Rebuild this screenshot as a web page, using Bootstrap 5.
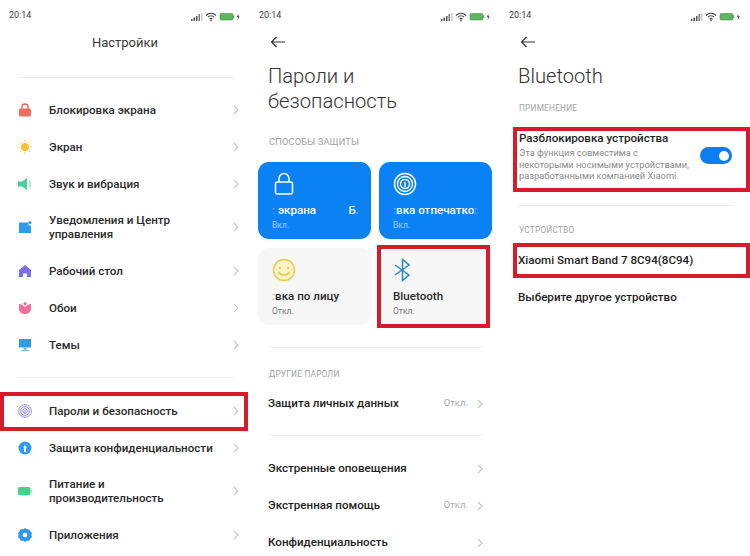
<!DOCTYPE html>
<html lang="ru">
<head>
<meta charset="UTF-8">
<title>Настройки</title>
<link rel="stylesheet" href="https://cdn.jsdelivr.net/npm/bootstrap@5.3.0/dist/css/bootstrap.min.css">
<style>
    html, body { height: 556px; overflow: hidden; }
    body { background: #fff; font-family: Roboto, "Noto Sans", sans-serif; color: #222; }
    .phones { width: 750px; height: 556px; }
    .phone { width: 250px; flex: none; overflow: hidden; position: relative; }
    .status { height: 30px; padding: 8px 9px 0 9px; font-size: 9px; line-height: 14px; color: #444; }
    .top-title { height: 24px; margin-top: 1px; margin-bottom: 22px; font-size: 13px; line-height: 24px; color: #3c3c3c; }
    .hr-line { height: 1px; background: #eee; margin-left: 18px; margin-right: 16px; }
    .set-row { min-height: 37px; padding-left: 18px; padding-right: 11px; font-size: 11.6px; font-weight: 500; line-height: 14px; color: #2a2a2a; position: relative; }
    .set-row.two-line { min-height: 50px; }
    .set-row.marked { min-height: 39px; margin-bottom: -2px; padding-bottom: 2px; }
    .row-ic { width: 14px; height: 14px; flex: none; margin-right: 17px; display: block; }
    .chev { width: 6px; height: 10px; flex: none; display: block; }
    .row-txt { flex: 1; }
    .red-box { position: absolute; border: 4px solid #d71a2c; pointer-events: none; }
    .settings-list { padding-top: 13px; }
    .group-gap { margin-top: 14px; margin-bottom: 14px; }
    .back-arrow { display: block; width: 16px; height: 12px; margin: 6px 0 0 20px; }
    .big-title { font-size: 20.2px; font-weight: 300; line-height: 25px; color: #333; margin: 16px 0 0 18px; }
    .sect-label { font-size: 8.3px; line-height: 12px; color: #a2a2a2; letter-spacing: .2px; margin-left: 19px; }
    .sect-label.wide { font-size: 9.2px; margin-top: 22px; }
    .tiles { padding-left: 8px; width: 242px; margin-top: 14px; display: grid; grid-template-columns: 113px 113px; gap: 9px 8px; }
    .tile { height: 77px; border-radius: 11px; padding: 10px 12px 0 14px; position: relative; color: #fff; }
    .tile-on { background: #0a82f5; }
    .tile-off { background: #f7f7f7; color: #2a2a2a; }
    .tile-ic { display: block; height: 24px; }
    .tile-ic.lock { margin-left: 2px; }
    .tile-name { font-size: 11.6px; font-weight: 500; line-height: 14px; margin-top: 7px; white-space: nowrap; overflow: hidden; }
    .tile-sub { font-size: 8.5px; line-height: 12px; margin-top: 2px; opacity: .6; }
    .tile-off .tile-sub { color: #777; opacity: 1; }
    .faded { opacity: .35; }
    .pass-row { padding-left: 18px; padding-right: 17px; min-height: 37px; font-size: 11.6px; font-weight: 500; color: #1e1e1e; }
    .off-note { font-size: 9.5px; font-weight: 400; color: #aaa; margin-right: 9px; }
    .unlock-box { height: 65px; margin-top: 13px; padding: 4px 18px 0 19px; }
    .sw-track { width: 32px; height: 17px; border-radius: 9px; background: #0a7df0; flex: none; padding: 0 3px; margin-top: 16px; }
    .sw-knob { width: 10px; height: 10px; border-radius: 50%; background: #fff; }
    .unlock-text { font-size: 9.3px; line-height: 11.5px; color: #8b8b8b; margin-top: 2px; }
    .unlock-title { font-size: 11.6px; font-weight: 500; line-height: 14px; color: #1e1e1e; }
</style>
</head>
<body>
<svg width="0" height="0" class="position-absolute">
    <symbol id="st-icons" viewBox="0 0 50 10">
        <rect x="0" y="7" width="1.5" height="2" fill="#555"/><rect x="2.5" y="5.5" width="1.5" height="3.5" fill="#555"/><rect x="5" y="4" width="1.5" height="5" fill="#555"/><rect x="7.5" y="2" width="1.5" height="7" fill="#777"/><rect x="10" y="1" width="1.5" height="8" fill="#ccc"/>
        <path d="M15 3.5c3-2.8 7-2.8 10 0M16.8 5.2c2-1.8 4.4-1.8 6.4 0M18.6 7c1-.9 1.8-.9 2.8 0" fill="none" stroke="#444" stroke-width="1.1"/><circle cx="20" cy="8.4" r=".8" fill="#444"/>
        <rect x="29" y="1.5" width="13" height="6.5" rx="1.3" fill="#5cb85c" stroke="#4a8f4a" stroke-width=".6"/><rect x="42.3" y="3.4" width="1" height="2.6" fill="#4a8f4a"/>
        <path d="M47.5 1.5 45.8 5.2h1.3l-.5 3 2-3.9h-1.3z" fill="#444"/>
    </symbol>
    <symbol id="chev" viewBox="0 0 6 10"><path d="M1 1l4 4-4 4" fill="none" stroke="#c4c4c4" stroke-width="1.1"/></symbol>
    <symbol id="back" viewBox="0 0 16 12"><path d="M15 6H1.5M6.5 1 1.5 6l5 5" fill="none" stroke="#333" stroke-width="1.2"/></symbol>
</svg>

<div class="phones d-flex">
    <!-- settings -->
    <div class="phone">
        <div class="status d-flex justify-content-between"><span>20:14</span><svg width="50" height="10" class="mt-1"><use href="#st-icons"/></svg></div>
        <div class="top-title text-center">Настройки</div>
        <div class="hr-line"></div>
        <div class="settings-list">
            <div class="set-row d-flex align-items-center">
                <svg class="row-ic" viewBox="0 0 14 14"><path d="M4 6V4a3 3 0 0 1 6 0v2" fill="none" stroke="#f0685a" stroke-width="1.5"/><rect x="1" y="5.5" width="12" height="8" rx="1.5" fill="#f0705f"/></svg>
                <span class="row-txt">Блокировка экрана</span><svg class="chev"><use href="#chev"/></svg>
            </div>
            <div class="set-row d-flex align-items-center">
                <svg class="row-ic" viewBox="0 0 14 14"><circle cx="7" cy="7" r="4" fill="#fbc02d"/><path d="M7 0v2M7 12v2M0 7h2M12 7h2M2 2l1.4 1.4M10.6 10.6 12 12M2 12l1.4-1.4M10.6 3.4 12 2" stroke="#fcd665" stroke-width="1.2"/></svg>
                <span class="row-txt">Экран</span><svg class="chev"><use href="#chev"/></svg>
            </div>
            <div class="set-row d-flex align-items-center">
                <svg class="row-ic" viewBox="0 0 14 14"><path d="M0 4.5h4L9 1v12L4 9.500H0z" fill="#4fcf9a"/><path d="M11 4c1.500 1.800 1.500 4.200 0 6" fill="none" stroke="#8fe2c0" stroke-width="1.500"/></svg>
                <span class="row-txt">Звук и вибрация</span><svg class="chev"><use href="#chev"/></svg>
            </div>
            <div class="set-row two-line d-flex align-items-center">
                <svg class="row-ic" viewBox="0 0 14 14"><path d="M1 2.500h9.500v3H13V13H1z" fill="#2f9bf0"/><circle cx="12" cy="2.500" r="1.500" fill="#2f9bf0"/></svg>
                <span class="row-txt">Уведомления и Центр<br>управления</span><svg class="chev"><use href="#chev"/></svg>
            </div>
            <div class="set-row d-flex align-items-center">
                <svg class="row-ic" viewBox="0 0 14 14"><path d="M7 1 1 6v7h4V9.500h4V13h4V6z" fill="#7a6fe8"/></svg>
                <span class="row-txt">Рабочий стол</span><svg class="chev"><use href="#chev"/></svg>
            </div>
            <div class="set-row d-flex align-items-center">
                <svg class="row-ic" viewBox="0 0 14 14"><path d="M1 3c2 0 4 1 6 3 2-2 4-3 6-3v5c0 3-3 5-6 5S1 11 1 8z" fill="#ee6f93"/><path d="M5 2.500 7 .8l2 1.700L7 5z" fill="#ee6f93"/></svg>
                <span class="row-txt">Обои</span><svg class="chev"><use href="#chev"/></svg>
            </div>
            <div class="set-row d-flex align-items-center">
                <svg class="row-ic" viewBox="0 0 14 14"><rect x="1" y="1" width="12" height="8.500" fill="#2f9bf0"/><path d="M5.500 9.500h3v2.500H11v1H3v-1h2.500z" fill="#7cc0f5"/></svg>
                <span class="row-txt">Темы</span><svg class="chev"><use href="#chev"/></svg>
            </div>
        </div>
        <div class="hr-line group-gap"></div>
        <div class="set-row marked d-flex align-items-center">
            <svg class="row-ic" viewBox="0 0 14 14"><g fill="none" stroke="#8b80dd" stroke-width=".9"><circle cx="7" cy="7" r="6.300"/><circle cx="7" cy="7" r="4.300"/><circle cx="7" cy="7" r="2.300"/><path d="M7 6v3"/></g></svg>
            <span class="row-txt">Пароли и безопасность</span><svg class="chev"><use href="#chev"/></svg>
            <div class="red-box" style="inset:0 2px 0 0"></div>
        </div>
        <div class="set-row d-flex align-items-center">
            <svg class="row-ic" viewBox="0 0 14 14"><circle cx="7" cy="7" r="6.500" fill="#2f9bf0"/><path d="M5 6.500 7 4l2 2.500H8V11H6V6.500z" fill="#fff"/></svg>
            <span class="row-txt">Защита конфиденциальности</span><svg class="chev"><use href="#chev"/></svg>
        </div>
        <div class="set-row two-line d-flex align-items-center">
            <svg class="row-ic" viewBox="0 0 14 14"><rect x="0" y="3" width="12.500" height="8" rx="1.500" fill="#3ed68a"/><rect x="13" y="5.500" width="1" height="3" fill="#8fe7bb"/></svg>
            <span class="row-txt">Питание и<br>производительность</span><svg class="chev"><use href="#chev"/></svg>
        </div>
        <div class="set-row d-flex align-items-center">
            <svg class="row-ic" viewBox="0 0 14 14"><path d="M7 0 9 1.300l2.300-.1 1 2.100 1.700 1.700-.6 2 .6 2-1.700 1.700-1 2.100L9 12.700 7 14l-2-1.300-2.300.1-1-2.100L0 9l.6-2L0 5l1.700-1.700 1-2.100L5 1.300z" fill="#2f9bf0"/><circle cx="7" cy="7" r="2.300" fill="#fff"/></svg>
            <span class="row-txt">Приложения</span><svg class="chev"><use href="#chev"/></svg>
        </div>
    </div>

    <!-- passwords -->
    <div class="phone">
        <div class="status d-flex justify-content-between"><span>20:14</span><svg width="50" height="10" class="mt-1"><use href="#st-icons"/></svg></div>
        <svg class="back-arrow"><use href="#back"/></svg>
        <div class="big-title">Пароли и<br>безопасность</div>
        <div class="sect-label wide">СПОСОБЫ ЗАЩИТЫ</div>
        <div class="tiles">
            <div class="tile tile-on">
                <svg class="tile-ic lock" width="20" height="24" viewBox="0 0 20 24"><path d="M5 10V6.500a5 5 0 0 1 10 0V10" fill="none" stroke="#fff" stroke-width="1.500"/><rect x="1.500" y="10" width="17" height="12" rx="2" fill="none" stroke="#fff" stroke-width="1.500"/></svg>
                <div class="tile-name d-flex justify-content-between"><span><span class="faded">:</span> экрана</span><span>Б<span class="faded">.</span></span></div>
                <div class="tile-sub">Вкл.</div>
            </div>
            <div class="tile tile-on">
                <svg class="tile-ic" width="24" height="24" viewBox="0 0 24 24"><g fill="none" stroke="#fff" stroke-width="1.400"><circle cx="12" cy="12" r="10.500"/><circle cx="12" cy="12" r="7.500"/><circle cx="12" cy="12" r="4.500"/><path d="M12 10v5"/></g></svg>
                <div class="tile-name"><span class="faded">:</span>вка отпечатко<span class="faded">:</span></div>
                <div class="tile-sub">Вкл.</div>
            </div>
            <div class="tile tile-off">
                <svg class="tile-ic" width="24" height="24" viewBox="0 0 24 24"><circle cx="12" cy="12" r="10.500" fill="#fbf3c4" stroke="#e3cd55" stroke-width="1.500"/><circle cx="8" cy="10" r="1.200" fill="#e3cd55"/><circle cx="16" cy="10" r="1.200" fill="#e3cd55"/><path d="M6.500 14c2.500 4 8.500 4 11 0" fill="none" stroke="#e3cd55" stroke-width="1.500"/></svg>
                <div class="tile-name"><span class="faded">:</span>вка по лицу</div>
                <div class="tile-sub">Откл.</div>
            </div>
            <div class="tile tile-off">
                <svg class="tile-ic" width="20" height="24" viewBox="0 0 20 24"><path d="M2 7l14 10-6.500 5.500V1.500L16 7 2 17" fill="none" stroke="#2a86c8" stroke-width="1.500"/></svg>
                <div class="tile-name">Bluetooth</div>
                <div class="tile-sub">Откл.</div>
                <div class="red-box" style="inset:-3px 2px -3px -2px"></div>
            </div>
        </div>
        <div class="hr-line" style="margin-top:22px"></div>
        <div class="sect-label" style="margin-top:20px">ДРУГИЕ ПАРОЛИ</div>
        <div class="pass-row d-flex align-items-center" style="margin-top:5px">
            <span class="row-txt">Защита личных данных</span><span class="off-note">Откл.</span><svg class="chev"><use href="#chev"/></svg>
        </div>
        <div class="hr-line" style="margin-top:13px;margin-bottom:14px"></div>
        <div class="pass-row d-flex align-items-center"><span class="row-txt">Экстренные оповещения</span><svg class="chev"><use href="#chev"/></svg></div>
        <div class="pass-row d-flex align-items-center"><span class="row-txt">Экстренная помощь</span><span class="off-note">Откл.</span><svg class="chev"><use href="#chev"/></svg></div>
        <div class="pass-row d-flex align-items-center"><span class="row-txt">Конфиденциальность</span><svg class="chev"><use href="#chev"/></svg></div>
    </div>

    <!-- bluetooth -->
    <div class="phone">
        <div class="status d-flex justify-content-between"><span>20:14</span><svg width="50" height="10" class="mt-1"><use href="#st-icons"/></svg></div>
        <svg class="back-arrow"><use href="#back"/></svg>
        <div class="big-title">Bluetooth</div>
        <div class="sect-label" style="margin-top:13px">ПРИМЕНЕНИЕ</div>
        <div class="unlock-box d-flex align-items-start position-relative">
            <div class="flex-grow-1">
                <div class="unlock-title">Разблокировка устройства</div>
                <div class="unlock-text">Эта функция совместима с<br>некоторыми носимыми устройствами,<br>разработанными компанией Xiaomi.</div>
            </div>
            <div class="sw-track d-flex align-items-center justify-content-end"><div class="sw-knob"></div></div>
            <div class="red-box" style="inset:0 0 0 13px"></div>
        </div>
        <div class="hr-line" style="margin-top:13px"></div>
        <div class="sect-label" style="margin-top:18px">УСТРОЙСТВО</div>
        <div class="pass-row d-flex align-items-center position-relative" style="margin-top:7px;min-height:35px">
            <span class="row-txt">Xiaomi Smart Band 7 8C94(8C94)</span>
            <div class="red-box" style="inset:0 0 0 13px"></div>
        </div>
        <div class="pass-row d-flex align-items-center" style="margin-top:1px">
            <span class="row-txt">Выберите другое устройство</span>
        </div>
    </div>
</div>
<script src="https://cdn.jsdelivr.net/npm/bootstrap@5.3.0/dist/js/bootstrap.bundle.min.js"></script>
</body>
</html>
